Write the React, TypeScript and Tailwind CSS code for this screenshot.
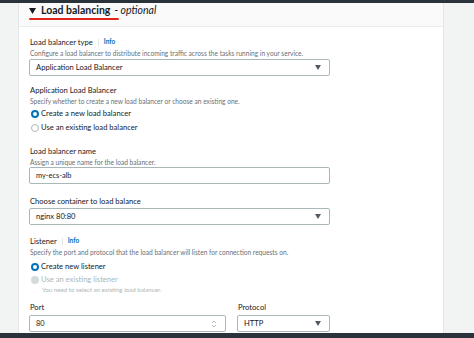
import React from 'react';

const font = { fontFamily: 'Lato, "Open Sans", sans-serif' };

const Caret: React.FC = () => (
  <svg width="6" height="5" viewBox="0 0 6 5" className="shrink-0">
    <polygon points="0,0 6,0 3,5" fill="#545b64" />
  </svg>
);

const Select: React.FC<{ value: string; className?: string }> = ({ value, className = '' }) => (
  <div
    className={`h-[17px] border border-[#aab7b8] rounded-[2px] bg-white flex items-center justify-between pl-[6px] pr-[8px] text-[7.6px] text-[#16191f] ${className}`}
  >
    <span>{value}</span>
    <Caret />
  </div>
);

const Label: React.FC<{ text: string; info?: boolean; className?: string }> = ({ text, info, className = '' }) => (
  <div className={`h-[12px] leading-[12px] flex items-center text-[7.6px] text-[#16191f] pl-[1px] ${className}`}>
    <span>{text}</span>
    {info && (
      <>
        <span className="mx-[5px] w-px h-[7px] bg-[#e4e7e8]" />
        <span className="text-[6.5px] font-bold text-[#0073bb]">Info</span>
      </>
    )}
  </div>
);

const Desc: React.FC<{ text: string; className?: string }> = ({ text, className = '' }) => (
  <div className={`h-[10px] leading-[10px] text-[6.6px] text-[#687078] pl-[1px] ${className}`}>{text}</div>
);

const Radio: React.FC<{ label: string; checked?: boolean; disabled?: boolean; className?: string }> = ({
  label,
  checked,
  disabled,
  className = '',
}) => (
  <div className={`h-[13px] flex items-center ${className}`}>
    <span className="w-[12px] flex justify-center">
      {checked ? (
        <span className="w-[8px] h-[8px] rounded-full border-[2.5px] border-[#0073bb] bg-white" />
      ) : disabled ? (
        <span className="w-[8px] h-[8px] rounded-full bg-[#d5dbdb]" />
      ) : (
        <span className="w-[8px] h-[8px] rounded-full border border-[#aab7b8] bg-white" />
      )}
    </span>
    <span className={`text-[7.6px] ${disabled ? 'text-[#aab7b8]' : 'text-[#16191f]'}`}>{label}</span>
  </div>
);

export default function App() {
  return (
    <div className="w-[474px] h-[338px] overflow-hidden bg-[#2a323c] flex flex-col" style={font}>
      <div className="h-[3px] bg-[#2a323c]" />
      <div className="h-[330px] flex">
        <div className="w-[19px] bg-[#f2f3f3] border-r border-[#e4e7e8]" />
        <div className="w-[425px] bg-white border-r border-[#e4e7e8] flex flex-col">
          {/* header */}
          <div className="h-[24px] bg-[#fafafa] border-b border-[#eaeded] pl-[10px] flex flex-col">
            <div className="h-[14px] mt-[1px] flex items-center text-[10.5px] font-bold text-[#16191f]">
              <span className="w-[12px] flex">
                <svg width="7" height="6" viewBox="0 0 7 6">
                  <polygon points="0,0 7,0 3.5,6" fill="#16191f" />
                </svg>
              </span>
              <span>Load balancing</span>
              <span className="font-normal italic ml-[4px]">- optional</span>
            </div>
            <div className="w-[90px] h-[2px] bg-[#e0261c] rounded-full" />
          </div>

          <div className="pl-[10px] w-[311px] flex flex-col pt-[9px]">
            <Label text="Load balancer type" info />
            <Desc text="Configure a load balancer to distribute incoming traffic across the tasks running in your service." />
            <Select value="Application Load Balancer" className="mt-[1px]" />

            <Label text="Application Load Balancer" className="mt-[8px]" />
            <Desc text="Specify whether to create a new load balancer or choose an existing one." />
            <Radio label="Create a new load balancer" checked className="mt-[1px]" />
            <Radio label="Use an existing load balancer" className="mt-[1px]" />

            <Label text="Load balancer name" className="mt-[11px]" />
            <Desc text="Assign a unique name for the load balancer." />
            <div className="h-[17px] border border-[#aab7b8] rounded-[2px] flex items-center pl-[6px] text-[7.4px] text-[#16191f]">
              my-ecs-alb
            </div>

            <Label text="Choose container to load balance" className="mt-[11px]" />
            <Select value="nginx 80:80" className="mt-[1px]" />

            <Label text="Listener" info className="mt-[10px]" />
            <Desc text="Specify the port and protocol that the load balancer will listen for connection requests on." />
            <Radio label="Create new listener" checked className="mt-[3px]" />
            <Radio label="Use an existing listener" disabled className="h-[12px]" />
            <div className="h-[8px] leading-[8px] text-[6.2px] text-[#aab7b8] pl-[13px]">
              You need to select an existing load balancer.
            </div>

            <div className="flex mt-[7px] gap-[11px]">
              <div className="w-[197px] flex flex-col">
                <Label text="Port" />
                <div className="mt-[2px] h-[17px] border border-[#aab7b8] rounded-[2px] flex items-center justify-between pl-[6px] pr-[8px] text-[7.4px] text-[#16191f]">
                  <span>80</span>
                  <svg width="6" height="8" viewBox="0 0 6 8">
                    <polyline points="1,3 3,1 5,3" fill="none" stroke="#aab7b8" strokeWidth="0.9" />
                    <polyline points="1,5 3,7 5,5" fill="none" stroke="#aab7b8" strokeWidth="0.9" />
                  </svg>
                </div>
              </div>
              <div className="flex-1 flex flex-col">
                <Label text="Protocol" />
                <Select value="HTTP" className="mt-[2px]" />
              </div>
            </div>
          </div>
        </div>
        <div className="flex-1 bg-[#f2f3f3]" />
      </div>
      <div className="flex-1 bg-[#2a323c]" />
    </div>
  );
}
